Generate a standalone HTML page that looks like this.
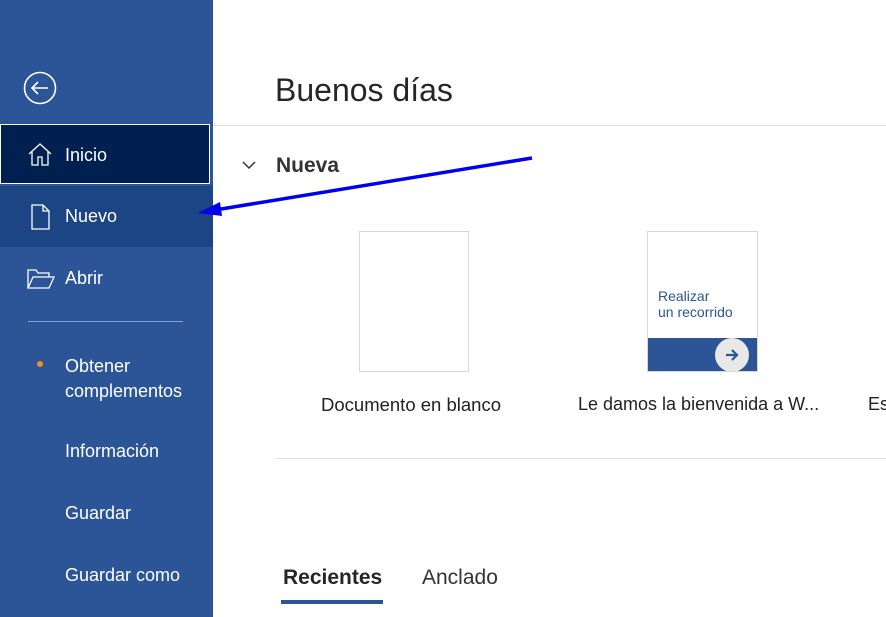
<!DOCTYPE html>
<html><head><meta charset="utf-8"><style>
body{margin:0;width:886px;height:617px;position:relative;overflow:hidden;background:#fff;font-family:"Liberation Sans",sans-serif}
.sb{position:absolute;left:0;top:0;width:213px;height:617px;background:#2b5597}
.t{position:absolute;color:#fff;font-size:18px;white-space:nowrap}
.d{position:absolute;color:#222;white-space:nowrap}
</style></head><body>
<div class="sb"></div>
<svg style="position:absolute;left:23px;top:71px" width="34" height="34" viewBox="0 0 34 34"><circle cx="17" cy="17" r="15.5" fill="none" stroke="#fff" stroke-width="1.6"/><path d="M25 17H9M15 11l-6 6 6 6" fill="none" stroke="#fff" stroke-width="1.6"/></svg>
<div style="position:absolute;left:0;top:124px;width:208px;height:58px;background:#002050;border:1.5px solid #fff"></div>
<div style="position:absolute;left:0;top:186px;width:213px;height:61px;background:#1b4583"></div>
<svg style="position:absolute;left:27px;top:142px" width="26" height="26" viewBox="0 0 26 26"><path d="M2 12L13 2l11 10M5 10v13h6v-8h4v8h6V10" fill="none" stroke="#fff" stroke-width="1.3"/></svg>
<div class="t" style="left:65px;top:145px">Inicio</div>
<svg style="position:absolute;left:30px;top:204px" width="22" height="26" viewBox="0 0 22 26"><path d="M2 1h11l6 6v18H2zM13 1v6h6" fill="none" stroke="#fff" stroke-width="1.3"/></svg>
<div class="t" style="left:65px;top:206px">Nuevo</div>
<svg style="position:absolute;left:27px;top:268px" width="28" height="22" viewBox="0 0 28 22"><path d="M1 20V2h8l2 3h11v4M1 20l5-11h21l-5 11z" fill="none" stroke="#fff" stroke-width="1.3"/></svg>
<div class="t" style="left:65px;top:268px">Abrir</div>
<div style="position:absolute;left:28px;top:321px;width:155px;height:1px;background:#8aa3cc"></div>
<div style="position:absolute;left:37px;top:361px;width:6px;height:6px;border-radius:50%;background:#f0901e"></div>
<div class="t" style="left:65px;top:354px;line-height:25px">Obtener<br>complementos</div>
<div class="t" style="left:65px;top:441px">Información</div>
<div class="t" style="left:65px;top:503px">Guardar</div>
<div class="t" style="left:65px;top:565px">Guardar como</div>
<div class="d" style="left:275px;top:72px;font-size:32px;color:#262626">Buenos días</div>
<div style="position:absolute;left:213px;top:125px;width:673px;height:1px;background:#e1e1e1"></div>
<svg style="position:absolute;left:241px;top:160px" width="16" height="10" viewBox="0 0 16 10"><path d="M2 2l6 6 6-6" fill="none" stroke="#333" stroke-width="1.5"/></svg>
<div class="d" style="left:276px;top:154px;font-size:21px;font-weight:bold;color:#333">Nueva</div>
<div style="position:absolute;left:359px;top:231px;width:108px;height:139px;border:1px solid #d6d6d6;background:#fff"></div>
<div class="d" style="left:321px;top:394px;font-size:18.5px">Documento en blanco</div>
<div style="position:absolute;left:647px;top:231px;width:109px;height:139px;border:1px solid #d6d6d6;background:#fff;overflow:hidden">
<div style="position:absolute;left:10px;top:56px;color:#2b5597;font-size:14px;line-height:16px">Realizar<br>un recorrido</div>
<div style="position:absolute;left:0;top:106px;width:109px;height:33px;background:#2b5597"></div>
<div style="position:absolute;left:67px;top:106px;width:34px;height:34px;border-radius:50%;background:#e8e8e8"></div>
<svg style="position:absolute;left:76px;top:115px" width="16" height="16" viewBox="0 0 16 16"><path d="M2 8h11M8 3l5 5-5 5" fill="none" stroke="#2b5597" stroke-width="2.2"/></svg>
</div>
<div class="d" style="left:578px;top:394px;font-size:18px">Le damos la bienvenida a W...</div>
<div class="d" style="left:868px;top:394px;font-size:18px">Es</div>
<div style="position:absolute;left:275px;top:458px;width:611px;height:1px;background:#e1e1e1"></div>
<div class="d" style="left:283px;top:566px;font-size:21px;font-weight:bold;color:#262626">Recientes</div>
<div style="position:absolute;left:281px;top:600px;width:102px;height:4px;background:#2b5597"></div>
<div class="d" style="left:422px;top:566px;font-size:21px;color:#333">Anclado</div>
<svg style="position:absolute;left:0;top:0" width="886" height="617"><path d="M532 158L215 210" stroke="#0000ee" stroke-width="3.5"/><path d="M198 213l22-11 2 14z" fill="#0000ee"/></svg>
</body></html>
